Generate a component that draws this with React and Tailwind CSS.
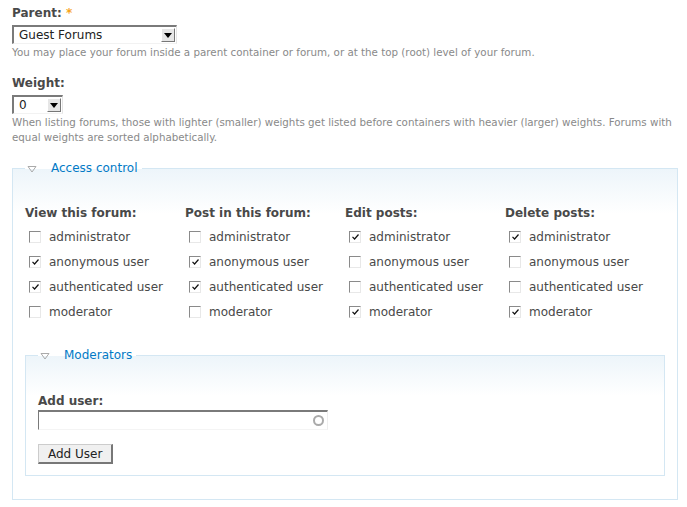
import React from 'react'

const font = { fontFamily: '"DejaVu Sans", Verdana, sans-serif' }

function FakeSelect({ value, width }) {
  return (
    <div className={`flex items-center h-[19px] bg-white border-t-2 border-l-2 border-[#7a7a7a] border-r border-b border-r-[#e4e4e4] border-b-[#f2f2f2] ${width}`}>
      <span className="flex-1 pl-[5px] text-[12px] text-[#222] leading-none">{value}</span>
      <span className="mr-[1px] flex h-[14px] w-[14px] items-center justify-center bg-[#e6e6e6] border-r border-b border-[#777] border-t border-l border-t-white border-l-white">
        <span className="block w-0 h-0 border-l-[4px] border-r-[4px] border-t-[5px] border-l-transparent border-r-transparent border-t-black" />
      </span>
    </div>
  )
}

function Box({ checked }) {
  return (
    <span className="relative inline-block h-[12px] w-[12px] shrink-0 bg-white border-t border-l border-[#8a8a8a] border-r border-b border-r-[#e8e8e8] border-b-[#e8e8e8]">
      {checked && (
        <svg className="absolute left-[1px] top-[1px]" width="9" height="8" viewBox="0 0 9 8">
          <path d="M1.5 3.8 L3.6 6 L7.5 1.5" fill="none" stroke="#111" strokeWidth="1.2" />
        </svg>
      )}
    </span>
  )
}

function Legend({ children }) {
  return (
    <legend className="px-[2px] flex items-center text-[12px] text-[#027ac6]">
      <svg width="10" height="8" viewBox="0 0 10 8" className="mr-[14px] mt-[2px]">
        <path d="M1 1.5 H9 L5 7 Z" fill="none" stroke="#aaa" strokeWidth="1" />
      </svg>
      <span className="pr-[2px]">{children}</span>
    </legend>
  )
}

const roles = ['administrator', 'anonymous user', 'authenticated user', 'moderator']
const columns = [
  { title: 'View this forum:', checked: [false, true, true, false] },
  { title: 'Post in this forum:', checked: [false, true, true, false] },
  { title: 'Edit posts:', checked: [true, false, false, true] },
  { title: 'Delete posts:', checked: [true, false, false, true] },
]

export default function App() {
  return (
    <div className="bg-white min-h-[507px] pl-[12px] pr-[9px] pt-[6px] text-[#494949]" style={font}>
      <div className="text-[12px] font-bold leading-[15px]">
        Parent: <span className="text-[#f7a41d]">*</span>
      </div>
      <div className="mt-[4px]">
        <FakeSelect value="Guest Forums" width="w-[165px]" />
      </div>
      <p className="mt-[1px] text-[10.3px] leading-[15px] text-[#898989]">
        You may place your forum inside a parent container or forum, or at the top (root) level of your forum.
      </p>

      <div className="mt-[16px] text-[12px] font-bold leading-[15px]">Weight:</div>
      <div className="mt-[4px]">
        <FakeSelect value="0" width="w-[51px]" />
      </div>
      <p className="mt-[1px] w-[660px] text-[10.3px] leading-[15px] text-[#898989]">
        When listing forums, those with lighter (smaller) weights get listed before containers with heavier (larger) weights. Forums with equal weights are sorted alphabetically.
      </p>

      <fieldset className="mt-[14px] border border-[#d4e7f3] bg-gradient-to-b from-[#edf5fa] to-white to-[45px] px-[12px] pb-[23px]">
        <Legend>Access control</Legend>
        <div className="mt-[29px] flex">
          {columns.map((col) => (
            <div key={col.title} className="w-[160px]">
              <div className="text-[12px] font-bold leading-[15px] text-[#494949]">{col.title}</div>
              <div className="mt-[3px]">
                {roles.map((r, i) => (
                  <label key={r} className="flex h-[25px] items-center pl-[4px] text-[12px] text-[#494949]">
                    <Box checked={col.checked[i]} />
                    <span className="ml-[8px]">{r}</span>
                  </label>
                ))}
              </div>
            </div>
          ))}
        </div>

        <fieldset className="mt-[22px] border border-[#d4e7f3] bg-gradient-to-b from-[#edf5fa] to-white to-[40px] px-[12px] pb-[10px]">
          <Legend>Moderators</Legend>
          <div className="mt-[30px] text-[12px] font-bold leading-[15px]">Add user:</div>
          <div className="mt-[1px] flex h-[20px] w-[290px] items-center justify-end bg-white border-t-2 border-l border-[#7a7a7a] border-r border-b border-r-[#eee] border-b-[#f4f4f4] pr-[3px]">
            <span className="block h-[11px] w-[11px] rounded-full border-2 border-[#aaa]" />
          </div>
          <button className="mt-[14px] h-[20px] px-[9px] bg-[#f0f0f0] border border-[#ccc] border-r-2 border-b-2 border-r-[#777] border-b-[#777] text-[12px] text-[#222] leading-none">
            Add User
          </button>
        </fieldset>
      </fieldset>
    </div>
  )
}
